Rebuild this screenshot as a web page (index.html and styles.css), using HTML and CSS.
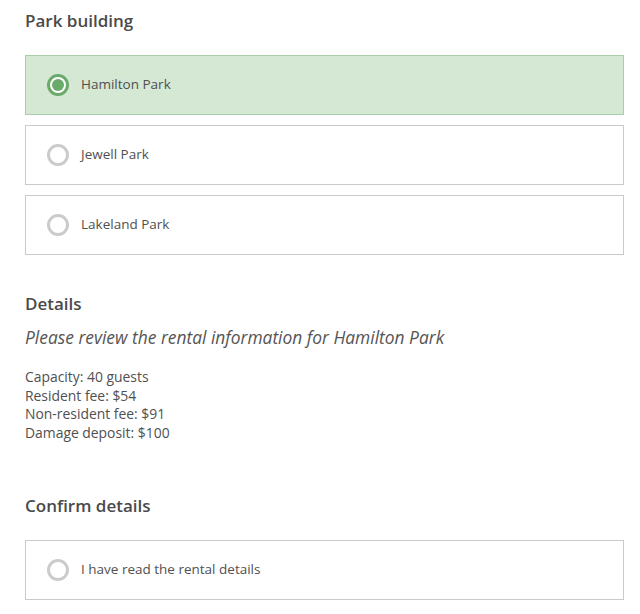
FILE: index.html
```html
<!DOCTYPE html>
<html>
<head>
<meta charset="utf-8">
<link rel="stylesheet" href="styles.css">
</head>
<body>
<div class="page">
  <h2 class="title first">Park building</h2>
  <div class="options">
    <label class="option selected"><span class="radio on"></span><span class="label">Hamilton Park</span></label>
    <label class="option"><span class="radio"></span><span class="label">Jewell Park</span></label>
    <label class="option"><span class="radio"></span><span class="label">Lakeland Park</span></label>
  </div>
  <h2 class="title details">Details</h2>
  <p class="subtitle">Please review the rental information for Hamilton Park</p>
  <div class="info">
    <div>Capacity: 40 guests</div>
    <div>Resident fee: $54</div>
    <div>Non-resident fee: $91</div>
    <div>Damage deposit: $100</div>
  </div>
  <h2 class="title confirm">Confirm details</h2>
  <div class="options">
    <label class="option"><span class="radio"></span><span class="label">I have read the rental details</span></label>
  </div>
</div>
</body>
</html>
```
FILE: styles.css
```css
html, body { margin: 0; padding: 0; background: #fff; }
body { font-family: "Open Sans", "Noto Sans", sans-serif; color: #4a4a4a; }
.page { padding: 0 16px 0 25px; }
.title { margin: 0; font-size: 17px; font-weight: 600; color: #4a4a4a; line-height: 24px; }
.title.first { padding-top: 9px; }
.options { display: flex; flex-direction: column; gap: 10px; margin-top: 22px; }
.option {
  display: flex; align-items: center; height: 58px; border: 1px solid #cacaca;
  background: #fff; padding-left: 21px; box-sizing: content-box;
}
.option.selected { background: #d4e8d4; border-color: #a9cda9; }
.radio {
  width: 16px; height: 16px; border: 3px solid #cbcbcb; border-radius: 50%;
  background: #fff; box-sizing: content-box; flex: none; position: relative;
}
.radio.on { border-color: #6aaa6a; }
.radio.on::after {
  content: ""; position: absolute; left: 2px; top: 2px; width: 12px; height: 12px;
  border-radius: 50%; background: #6aaa6a;
}
.label { margin-left: 12px; font-size: 13.5px; color: #505050; line-height: 18px; margin-bottom: 2px; }
.title.details { margin-top: 37px; }
.subtitle { margin: 10px 0 0; font-size: 17.4px; font-style: italic; color: #555; line-height: 22px; }
.info { margin-top: 20px; font-size: 13.9px; line-height: 18.5px; color: #505050; }
.title.confirm { margin-top: 52px; }
```
